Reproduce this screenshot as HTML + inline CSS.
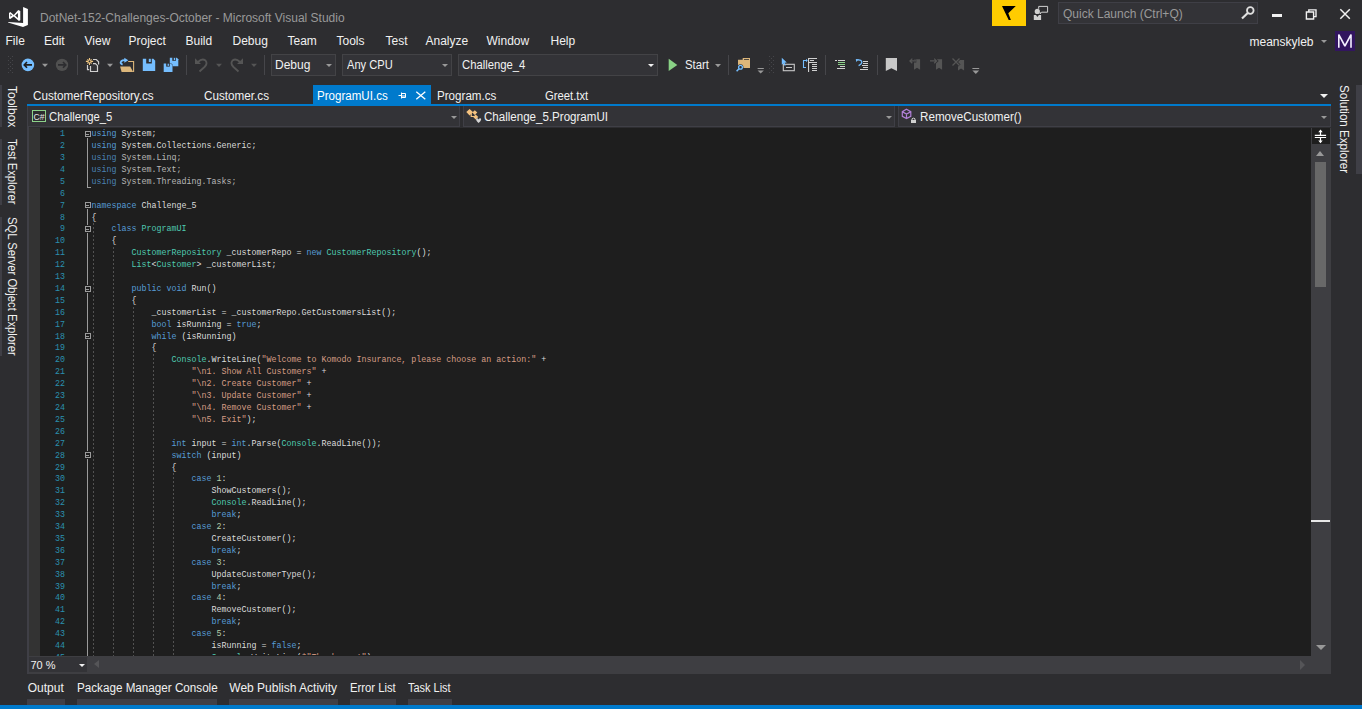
<!DOCTYPE html>
<html><head><meta charset="utf-8">
<style>
*{margin:0;padding:0;box-sizing:border-box}
html,body{width:1362px;height:709px;overflow:hidden;background:#2D2D30}
body{position:relative;font-family:"Liberation Sans",sans-serif;font-size:12px;color:#F1F1F1}
.a{position:absolute}
.tx{position:absolute;white-space:pre;line-height:14px}
svg{position:absolute;overflow:visible}
.ln,.num{position:absolute;white-space:pre;font-family:"Liberation Mono",monospace;font-size:8.333px;line-height:12px;height:12px}
.ln{left:91.5px;color:#DCDCDC}
.num{left:40px;width:25px;text-align:right;color:#2B91AF}
i{font-style:normal}
.k{color:#569CD6}.t{color:#4EC9B0}.s{color:#D69D85}.n{color:#B5CEA8}
.dim{opacity:.8}
.dd{position:absolute;background:#333337;border:1px solid #434346}
.arr{position:absolute;width:0;height:0;border-left:3px solid transparent;border-right:3px solid transparent;border-top:3px solid #999}
.sep{position:absolute;width:1px;height:20px;top:55px;background:#46464A}
.vt{position:absolute;white-space:pre;transform-origin:0 0;transform:rotate(90deg);line-height:14px}
.bar{position:absolute;background:#3F3F46}
.gd{position:absolute;width:1px;background:repeating-linear-gradient(to bottom,#525252 0,#525252 2px,transparent 2px,transparent 4px)}
.ol{position:absolute;background:#9B9B9B}
.fb{position:absolute;left:85px;width:6px;height:6px;border:1px solid #9B9B9B;background:#1E1E1E;box-shadow:0 0 0 1px #1E1E1E}
.fb::after{content:"";position:absolute;left:0;top:2px;width:3px;height:1px;background:#9B9B9B}
</style></head><body>

<!-- ===== TITLE BAR ===== -->
<svg style="left:0;top:0" width="40" height="30" viewBox="0 0 40 30">
  <path fill="#fff" d="M23.1 7 L27.9 8.9 L27.9 25 L23 27.1 L8 22.6 L8.3 22 L23.1 23 Z"/>
  <path fill="#fff" fill-rule="evenodd" d="M9 12.9 L10.3 12.1 L13.8 15 L18.2 10 L20.3 10.9 V20.3 L18.9 20.9 L13.8 16.6 L10.3 19.1 L9 18.4 Z M10.4 14 V16.7 L12 15.3 Z M17.9 12.9 V17.9 L15.1 15.4 Z"/>
</svg>
<div class="tx" style="left:40px;top:11px;color:#999999">DotNet-152-Challenges-October - Microsoft Visual Studio</div>

<div class="a" style="left:992px;top:0;width:34px;height:26px;background:#FFCC00"></div>
<svg style="left:992px;top:0" width="34" height="26" viewBox="992 0 34 26">
  <path fill="#000" d="M1002 5.9 L1015.8 5.9 L1008.3 13.3 L1010.9 19.9 L1008.7 19.9 Z"/>
</svg>
<svg style="left:1030px;top:4px" width="20" height="20" viewBox="1030 4 20 20">
  <circle cx="1037.3" cy="11.4" r="2.6" fill="#D0D0D0"/>
  <path fill="#D0D0D0" d="M1033.8 15 L1036 15 L1037.4 17 L1038.9 15 L1041.1 15 L1041.1 20.1 L1033.8 20.1 Z"/>
  <path fill="none" stroke="#D0D0D0" stroke-width="1" d="M1038.7 8.8 V6.4 H1047.6 V12.2 H1041.5 L1040.2 14 L1040.2 12.2"/>
</svg>
<div class="a" style="left:1058px;top:2px;width:200px;height:22px;background:#333337;border:1px solid #3F3F46"></div>
<div class="tx" style="left:1063px;top:7px;color:#999999">Quick Launch (Ctrl+Q)</div>
<svg style="left:1238px;top:4px" width="20" height="18" viewBox="1238 4 20 18">
  <circle cx="1250.3" cy="10.5" r="3.3" fill="none" stroke="#E0E0E0" stroke-width="1.8"/>
  <path d="M1248 12.8 L1242 18.5" stroke="#E0E0E0" stroke-width="2.2"/>
</svg>
<div class="a" style="left:1272px;top:14px;width:10px;height:3px;background:#F1F1F1"></div>
<svg style="left:1302px;top:6px" width="20" height="16" viewBox="1302 6 20 16">
  <path fill="none" stroke="#F1F1F1" stroke-width="1.4" d="M1306.4 12 H1313.6 V19 H1306.4 Z M1308.8 12 V9.9 H1316 V16.6 H1313.6"/>
</svg>
<svg style="left:1336px;top:6px" width="18" height="16" viewBox="1336 6 18 16">
  <path stroke="#F1F1F1" stroke-width="1.5" d="M1340.3 9.3 L1349.8 18.8 M1349.8 9.3 L1340.3 18.8"/>
</svg>

<!-- ===== MENU BAR ===== -->
<div class="tx" style="left:5.5px;top:34px">File</div>
<div class="tx" style="left:44px;top:34px">Edit</div>
<div class="tx" style="left:84.5px;top:34px">View</div>
<div class="tx" style="left:128.5px;top:34px">Project</div>
<div class="tx" style="left:185.5px;top:34px">Build</div>
<div class="tx" style="left:232.5px;top:34px">Debug</div>
<div class="tx" style="left:287.5px;top:34px">Team</div>
<div class="tx" style="left:336.5px;top:34px">Tools</div>
<div class="tx" style="left:385.5px;top:34px">Test</div>
<div class="tx" style="left:425.5px;top:34px">Analyze</div>
<div class="tx" style="left:486.5px;top:34px">Window</div>
<div class="tx" style="left:550.5px;top:34px">Help</div>

<div class="tx" style="left:1249.5px;top:35px">meanskyleb</div>
<div class="arr" style="left:1321px;top:40px"></div>
<div class="a" style="left:1335px;top:31px;width:20px;height:20px;background:#32155F"></div>
<svg style="left:1335px;top:31px" width="20" height="20" viewBox="1335 31 20 20"><path fill="none" stroke="#F4F0FF" stroke-width="1.6" stroke-linejoin="bevel" d="M1338.8 47.7 V34.6 L1344.9 46 L1351 34.6 V47.7"/></svg>

<!-- ===== TOOLBAR ===== -->
<svg style="left:0;top:52px" width="990" height="26" viewBox="0 52 990 26">
  <!-- grip -->
  <g fill="#46464A">
    <rect x="8" y="56" width="1" height="1"/><rect x="12" y="56" width="1" height="1"/>
    <rect x="10" y="58" width="1" height="1"/>
    <rect x="8" y="60" width="1" height="1"/><rect x="12" y="60" width="1" height="1"/>
    <rect x="10" y="62" width="1" height="1"/>
    <rect x="8" y="64" width="1" height="1"/><rect x="12" y="64" width="1" height="1"/>
    <rect x="10" y="66" width="1" height="1"/>
    <rect x="8" y="68" width="1" height="1"/><rect x="12" y="68" width="1" height="1"/>
    <rect x="10" y="70" width="1" height="1"/>
    <rect x="8" y="72" width="1" height="1"/><rect x="12" y="72" width="1" height="1"/>
  </g>
  <!-- back -->
  <circle cx="27.9" cy="64.9" r="6.3" fill="#75BEFF"/>
  <path d="M24.2 64.9 H32 M27 62 L24.2 64.9 L27 67.8" fill="none" stroke="#1E1E1E" stroke-width="1.6"/>
  <path d="M42 63.8 H48 L45 67 Z" fill="#999"/>
  <!-- forward -->
  <circle cx="62" cy="64.9" r="6.2" fill="#505050"/>
  <path d="M58 64.9 H65.8 M63 62 L65.8 64.9 L63 67.8" fill="none" stroke="#2D2D30" stroke-width="1.6"/>
  <rect x="77" y="55" width="1" height="20" fill="#46464A"/>
  <!-- new project -->
  <path d="M93 59.5 H96.3 L98.6 61.8 V64.5" fill="none" stroke="#D0D0D0" stroke-width="1.2"/>
  <path d="M87.5 65 V69.6 H89.2" fill="none" stroke="#D0D0D0" stroke-width="1.2"/>
  <path d="M90.5 63.6 H95.4 L97.5 65.7 V71.5 H90.5 Z" fill="#333337"/>
  <path d="M93 63.6 H95.4 L97.5 65.7 V71.5 H90.5 V66" fill="none" stroke="#D0D0D0" stroke-width="1.2"/>
  <g stroke="#F2C77F" stroke-width="1.1" fill="none"><path d="M89.5 58 V64.9 M85.9 61.4 H93.1 M87.4 59.4 L91.6 63.5 M91.6 59.4 L87.4 63.5"/></g>
  <circle cx="89.5" cy="61.4" r="1.3" fill="#2D2D30" stroke="#F2C77F" stroke-width="0.9"/>
  <path d="M107 63.8 H113 L110 67 Z" fill="#999"/>
  <!-- open -->
  <path d="M128.2 61.5 H133.6 V72" fill="none" stroke="#DCB67A" stroke-width="1.1"/>
  <path d="M120.1 66.6 H130.2 L133.2 72 H121.6 Z" fill="#DCB67A"/>
  <path d="M122.6 64.6 Q119.6 63.2 121.2 61.3 Q122.6 60 125.2 60.2" fill="none" stroke="#75BEFF" stroke-width="1.9"/>
  <path d="M124.3 57.8 L128.3 60.3 L124.3 62.8 Z" fill="#75BEFF"/>
  <!-- save -->
  <path d="M142.8 58.8 H153.3 L155.2 60.7 V71.1 H142.8 Z" fill="#75BEFF"/>
  <rect x="146.2" y="58" width="5.6" height="5.5" fill="#2D2D30"/>
  <rect x="148.8" y="58.8" width="2" height="3.2" fill="#75BEFF"/>
  <!-- save all -->
  <path d="M169.8 57.8 H176.8 L178.3 59.3 V66.3 H169.8 Z" fill="#75BEFF"/>
  <rect x="172.3" y="57.2" width="3.6" height="3.6" fill="#2D2D30"/>
  <rect x="173.8" y="57.9" width="1.3" height="2.2" fill="#75BEFF"/>
  <path d="M163.2 63.2 H171 L172.9 65.1 V72.4 H163.2 Z" fill="#2D2D30"/>
  <path d="M163.7 63.6 H170.8 L172.5 65.3 V72 H163.7 Z" fill="#75BEFF"/>
  <rect x="166.2" y="63" width="3.6" height="3.6" fill="#2D2D30"/>
  <rect x="167.6" y="63.7" width="1.3" height="2.2" fill="#75BEFF"/>
  <rect x="186" y="55" width="1" height="20" fill="#46464A"/>
  <!-- undo/redo -->
  <g fill="none" stroke="#555555" stroke-width="1.8">
    <path d="M198 62 Q202 58 205.5 60.5 Q208 63.5 204.5 67 L199.5 71.5"/>
    <path d="M240 62 Q236 58 232.5 60.5 Q230 63.5 233.5 67 L238.5 71.5"/>
  </g>
  <path d="M195 58.2 L195 64 L201 64 Z" fill="#555555"/>
  <path d="M243 58.2 L243 64 L237 64 Z" fill="#555555"/>
  <path d="M216 63.8 H222 L219 67 Z" fill="#555"/>
  <path d="M251 63.8 H257 L254 67 Z" fill="#555"/>
  <rect x="264" y="55" width="1" height="20" fill="#46464A"/>
  <!-- start -->
  <path d="M668.7 58.7 L677.3 64.9 L668.7 71 Z" fill="#89D185"/>
  <path d="M715 64 H721 L718 67.3 Z" fill="#999"/>
  <rect x="728" y="55" width="1" height="20" fill="#46464A"/>
  <!-- find in files -->
  <path d="M738 59.7 H742.7 V58 H750 V68 H738 Z" fill="#DCB67A"/>
  <rect x="744" y="59" width="5" height="0.8" fill="#2D2D30"/>
  <circle cx="740.5" cy="67.2" r="2.9" fill="#2D2D30"/>
  <circle cx="740.5" cy="67.2" r="1.9" fill="#2D2D30" stroke="#75BEFF" stroke-width="1.3"/>
  <path d="M739 68.8 L736.6 71.3" stroke="#75BEFF" stroke-width="1.5"/>
  <rect x="757.6" y="68" width="6.2" height="1" fill="#999"/>
  <path d="M757.6 70.4 H763.8 L760.7 73.6 Z" fill="#999"/>
  <g fill="#46464A">
    <rect x="769" y="56" width="1" height="1"/><rect x="773" y="56" width="1" height="1"/><rect x="771" y="58" width="1" height="1"/><rect x="769" y="60" width="1" height="1"/><rect x="773" y="60" width="1" height="1"/><rect x="771" y="62" width="1" height="1"/><rect x="769" y="64" width="1" height="1"/><rect x="773" y="64" width="1" height="1"/><rect x="771" y="66" width="1" height="1"/><rect x="769" y="68" width="1" height="1"/><rect x="773" y="68" width="1" height="1"/><rect x="771" y="70" width="1" height="1"/><rect x="769" y="72" width="1" height="1"/><rect x="773" y="72" width="1" height="1"/></g>
  <!-- pointer + rect -->
  <rect x="783.3" y="64.3" width="11" height="6.4" fill="none" stroke="#C8C8C8" stroke-width="1.1"/>
  <rect x="786" y="67" width="6" height="1" fill="#C8C8C8"/>
  <path d="M781.8 57.8 L786.8 62.5 L784.6 62.8 L785.8 65.3 L784.6 65.8 L783.4 63.4 L781.8 64.8 Z" fill="#75BEFF"/>
  <!-- format icon -->
  <path d="M806.5 60.5 H803.5 V67.5 H806" fill="none" stroke="#75BEFF" stroke-width="1.1"/>
  <path d="M806 58.8 L807.8 60.5 L806 62.2 Z" fill="#75BEFF"/>
  <rect x="808" y="58" width="1.1" height="14" fill="#D0D0D0"/>
  <g fill="#D0D0D0"><rect x="808" y="58" width="9" height="1"/><rect x="810" y="60" width="4" height="1"/><rect x="808" y="62" width="9" height="1"/><rect x="812" y="64" width="5" height="1"/><rect x="812" y="66" width="5" height="1"/><rect x="812" y="68" width="5" height="1"/><rect x="812" y="70" width="5" height="1"/></g>
  <rect x="825" y="55" width="1" height="20" fill="#46464A"/>
  <!-- comment -->
  <g fill="#D0D0D0"><rect x="835" y="60" width="2" height="1"/><rect x="838" y="60" width="7" height="1"/><rect x="840" y="66" width="5" height="1"/><rect x="837" y="68" width="8" height="1"/></g>
  <g fill="#8DD28A"><rect x="838" y="62" width="7" height="1"/><rect x="838" y="64" width="7" height="1"/></g>
  <!-- uncomment -->
  <path d="M857.5 60 Q861.8 59.5 861.8 62.2 Q861.8 64 858.6 65.6" fill="none" stroke="#75BEFF" stroke-width="1.3"/>
  <path d="M855.8 59 L858.8 59.2 L856.3 62 Z" fill="#75BEFF"/>
  <g fill="#D0D0D0"><rect x="863" y="61" width="5" height="1"/><rect x="863" y="63" width="5" height="1"/><rect x="862" y="65" width="6" height="1"/><rect x="863" y="67" width="5" height="1"/><rect x="860" y="69" width="8" height="1"/></g>
  <rect x="877" y="55" width="1" height="20" fill="#46464A"/>
  <!-- bookmarks -->
  <path d="M885.8 57.9 H897 V71 L891.4 68.3 L885.8 71 Z" fill="#C8C8C8"/>
  <g fill="#555555">
    <path d="M914 59.2 H920.1 V69.8 L917 67.8 L914 69.8 Z"/>
    <path d="M936 59.2 H942.1 V69.8 L939 67.8 L936 69.8 Z"/>
    <path d="M958 60 H964.1 V70.5 L961 68.5 L958 70.5 Z"/>
  </g>
  <g fill="none" stroke="#2D2D30" stroke-width="3">
    <path d="M916.3 60.9 H910 M912.3 58.6 L910 60.9 L912.3 63.2"/>
    <path d="M930 60.9 H936.5 M934.2 58.6 L936.5 60.9 L934.2 63.2"/>
    <path d="M952.5 58.5 L959.5 65.5 M959.5 58.5 L952.5 65.5"/>
  </g>
  <g fill="none" stroke="#555555" stroke-width="1.3">
    <path d="M916.3 60.9 H910 M912.3 58.6 L910 60.9 L912.3 63.2"/>
    <path d="M930 60.9 H936.5 M934.2 58.6 L936.5 60.9 L934.2 63.2"/>
    <path d="M952.5 58.5 L959.5 65.5 M959.5 58.5 L952.5 65.5"/>
  </g>
  <rect x="972.4" y="68" width="6.8" height="1" fill="#999"/>
  <path d="M972.4 70.4 H979.2 L975.8 74 Z" fill="#999"/>
</svg>
<div class="dd" style="left:271px;top:54px;width:65px;height:22px"></div>
<div class="tx" style="left:275px;top:58px">Debug</div>
<div class="arr" style="left:326px;top:64px"></div>
<div class="dd" style="left:342px;top:54px;width:110px;height:22px"></div>
<div class="tx" style="left:346.8px;top:58px;transform:scaleX(0.926);transform-origin:0 0">Any CPU</div>
<div class="arr" style="left:442px;top:64px"></div>
<div class="dd" style="left:458px;top:54px;width:200px;height:22px"></div>
<div class="tx" style="left:461.6px;top:58px;transform:scaleX(0.94);transform-origin:0 0">Challenge_4</div>
<div class="arr" style="left:648px;top:64px;border-top-color:#F1F1F1"></div>
<div class="tx" style="left:684.8px;top:58px;transform:scaleX(0.944);transform-origin:0 0">Start</div>


<!-- ===== LEFT VERTICAL TABS ===== -->
<div class="bar" style="left:0;top:85px;width:2px;height:42px"></div>
<div class="vt" style="left:19px;top:86px">Toolbox</div>
<div class="bar" style="left:0;top:139px;width:2px;height:66px"></div>
<div class="vt" style="left:19px;top:139px;transform:rotate(90deg) scaleX(0.937)">Test Explorer</div>
<div class="bar" style="left:0;top:217px;width:2px;height:139px"></div>
<div class="vt" style="left:19px;top:217px;transform:rotate(90deg) scaleX(0.936)">SQL Server Object Explorer</div>

<!-- ===== RIGHT VERTICAL TAB ===== -->
<div class="bar" style="left:1356px;top:85px;width:6px;height:89px"></div>
<div class="vt" style="left:1351px;top:85px;transform:rotate(90deg) scaleX(0.964)">Solution Explorer</div>

<!-- ===== DOC TABS ===== -->
<div class="tx" style="left:32.5px;top:89px;transform:scaleX(0.975);transform-origin:0 0">CustomerRepository.cs</div>
<div class="tx" style="left:203.5px;top:89px;transform:scaleX(0.976);transform-origin:0 0">Customer.cs</div>
<div class="a" style="left:313px;top:85px;width:118px;height:20px;background:#007ACC"></div>
<div class="tx" style="left:316.8px;top:89px;color:#fff;transform:scaleX(0.964);transform-origin:0 0">ProgramUI.cs</div>
<svg style="left:396px;top:88px" width="14" height="14" viewBox="396 88 14 14">
  <path fill="none" stroke="#fff" stroke-width="1" d="M398.5 95.5 H401.5 M401.5 92.5 V98.5 M401.5 93.5 H405.5 V97.5 H401.5 M401.5 96 H405.5"/>
</svg>
<svg style="left:414px;top:89px" width="14" height="14" viewBox="414 89 14 14">
  <path stroke="#fff" stroke-width="1.3" d="M416.3 91.7 L425.3 99.2 M425.3 91.7 L416.3 99.2"/>
</svg>
<div class="tx" style="left:436.6px;top:89px;transform:scaleX(0.967);transform-origin:0 0">Program.cs</div>
<div class="tx" style="left:545.2px;top:89px;transform:scaleX(0.94);transform-origin:0 0">Greet.txt</div>
<div class="arr" style="left:1320px;top:94px;border-left-width:4.2px;border-right-width:4.2px;border-top:4.2px solid #F1F1F1"></div>
<div class="a" style="left:27px;top:104px;width:1304px;height:2px;background:#007ACC"></div>

<!-- ===== NAV BAR ===== -->
<div class="a" style="left:27px;top:106px;width:1304px;height:22px;background:#2D2D30"></div>
<div class="a" style="left:27px;top:106px;width:433px;height:21px;background:#333337;border:1px solid #3F3F46;border-top:0"></div>
<div class="a" style="left:463px;top:106px;width:432px;height:21px;background:#333337;border:1px solid #3F3F46;border-top:0"></div>
<div class="a" style="left:898px;top:106px;width:433px;height:21px;background:#333337;border:1px solid #3F3F46;border-top:0"></div>
<div class="arr" style="left:451px;top:116px"></div>
<div class="arr" style="left:886px;top:116px"></div>
<div class="arr" style="left:1321px;top:116px"></div>
<svg style="left:31px;top:109px" width="16" height="14" viewBox="31 109 16 14">
  <rect x="32.5" y="110.5" width="13" height="11" fill="#2D2D30" stroke="#8DD28A" stroke-width="1"/>
  <text x="33.6" y="119.6" font-family="Liberation Sans" font-size="9.6" fill="#E6E6E6" textLength="11" lengthAdjust="spacingAndGlyphs">C#</text>
</svg>
<div class="tx" style="left:49.3px;top:110px;transform:scaleX(0.94);transform-origin:0 0">Challenge_5</div>
<svg style="left:465px;top:108px" width="18" height="16" viewBox="465 108 18 16">
  <path fill="#F4C27F" d="M469.6 108.9 L472.9 112.1 L469.6 115.4 L466.3 112.1 Z M474.8 110.2 L477.3 112.6 L474.8 115.1 L472.3 112.6 Z M475.7 114.4 L478.2 116.9 L475.7 119.4 L473.2 116.9 Z"/>
  <path fill="none" stroke="#F4C27F" stroke-width="1.2" d="M471.2 112.5 V116.5 H474"/>
  <path fill="#D4D4D4" d="M478.6 119.4 C477.6 117.6 475.9 118 476.1 119.7 C476.3 120.8 477.6 121.9 478.6 123 C479.6 121.9 480.9 120.8 481.1 119.7 C481.3 118 479.6 117.6 478.6 119.4 Z"/>
</svg>
<div class="tx" style="left:484.4px;top:110px;transform:scaleX(0.963);transform-origin:0 0">Challenge_5.ProgramUI</div>
<svg style="left:900px;top:107px" width="18" height="18" viewBox="900 107 18 18">
  <path fill="none" stroke="#B180D7" stroke-width="1.2" d="M906.5 109.3 L910.8 111.7 L910.8 116.3 L906.5 118.6 L902.3 116.3 L902.3 111.7 Z M902.5 111.9 L906.5 114.1 L910.6 111.9 M906.5 114.1 V118.5"/>
  <path fill="#D0D0D0" d="M911 120 H916 V123 H911 Z"/>
  <path fill="none" stroke="#D0D0D0" stroke-width="1" d="M912 120 V118.8 Q913.5 117.5 915 118.8 V120"/>
</svg>
<div class="tx" style="left:919.5px;top:110px;transform:scaleX(0.97);transform-origin:0 0">RemoveCustomer()</div>

<!-- ===== EDITOR ===== -->
<div class="a" style="left:27px;top:127px;width:2px;height:547px;background:#3F3F46"></div>
<div class="a" style="left:29px;top:128px;width:11px;height:528px;background:#333333"></div>
<div class="a" style="left:40px;top:128px;width:1271px;height:528px;background:#1E1E1E;overflow:hidden">
  <div class="a" style="left:-40px;top:-128px;width:1362px;height:709px">
<div class="num" style="top:128.200px">1</div>
<div class="num" style="top:140.105px">2</div>
<div class="num" style="top:152.010px">3</div>
<div class="num" style="top:163.915px">4</div>
<div class="num" style="top:175.820px">5</div>
<div class="num" style="top:187.725px">6</div>
<div class="num" style="top:199.630px">7</div>
<div class="num" style="top:211.535px">8</div>
<div class="num" style="top:223.440px">9</div>
<div class="num" style="top:235.345px">10</div>
<div class="num" style="top:247.250px">11</div>
<div class="num" style="top:259.155px">12</div>
<div class="num" style="top:271.060px">13</div>
<div class="num" style="top:282.965px">14</div>
<div class="num" style="top:294.870px">15</div>
<div class="num" style="top:306.775px">16</div>
<div class="num" style="top:318.680px">17</div>
<div class="num" style="top:330.585px">18</div>
<div class="num" style="top:342.490px">19</div>
<div class="num" style="top:354.395px">20</div>
<div class="num" style="top:366.300px">21</div>
<div class="num" style="top:378.205px">22</div>
<div class="num" style="top:390.110px">23</div>
<div class="num" style="top:402.015px">24</div>
<div class="num" style="top:413.920px">25</div>
<div class="num" style="top:425.825px">26</div>
<div class="num" style="top:437.730px">27</div>
<div class="num" style="top:449.635px">28</div>
<div class="num" style="top:461.540px">29</div>
<div class="num" style="top:473.445px">30</div>
<div class="num" style="top:485.350px">31</div>
<div class="num" style="top:497.255px">32</div>
<div class="num" style="top:509.160px">33</div>
<div class="num" style="top:521.065px">34</div>
<div class="num" style="top:532.970px">35</div>
<div class="num" style="top:544.875px">36</div>
<div class="num" style="top:556.780px">37</div>
<div class="num" style="top:568.685px">38</div>
<div class="num" style="top:580.590px">39</div>
<div class="num" style="top:592.495px">40</div>
<div class="num" style="top:604.400px">41</div>
<div class="num" style="top:616.305px">42</div>
<div class="num" style="top:628.210px">43</div>
<div class="num" style="top:640.115px">44</div>
<div class="num" style="top:652.020px">45</div>
<div class="gd" style="left:93px;top:223.44px;height:436.56px"></div>
<div class="gd" style="left:113px;top:247.25px;height:412.75px"></div>
<div class="gd" style="left:133px;top:306.77px;height:353.23px"></div>
<div class="gd" style="left:153px;top:354.39px;height:305.61px"></div>
<div class="gd" style="left:173px;top:473.44px;height:186.56px"></div>
<div class="ol" style="left:87px;top:137px;width:1px;height:50px"></div>
<div class="ol" style="left:87px;top:187px;width:4px;height:1px"></div>
<div class="ol" style="left:87px;top:208px;width:1px;height:452px"></div>
<div class="fb" style="top:131px"></div>
<div class="fb" style="top:202px"></div>
<div class="fb" style="top:226px"></div>
<div class="fb" style="top:286px"></div>
<div class="fb" style="top:333px"></div>
<div class="fb" style="top:452px"></div>
<div class="ln" style="top:128.200px"><i class="k">using</i> System;</div>
<div class="ln" style="top:140.105px"><i class="k">using</i> System.Collections.Generic;</div>
<div class="ln dim" style="top:152.010px"><i class="k">using</i> System.Linq;</div>
<div class="ln dim" style="top:163.915px"><i class="k">using</i> System.Text;</div>
<div class="ln dim" style="top:175.820px"><i class="k">using</i> System.Threading.Tasks;</div>
<div class="ln" style="top:187.725px"></div>
<div class="ln" style="top:199.630px"><i class="k">namespace</i> Challenge_5</div>
<div class="ln" style="top:211.535px">{</div>
<div class="ln" style="top:223.440px">    <i class="k">class</i> <i class="t">ProgramUI</i></div>
<div class="ln" style="top:235.345px">    {</div>
<div class="ln" style="top:247.250px">        <i class="t">CustomerRepository</i> _customerRepo = <i class="k">new</i> <i class="t">CustomerRepository</i>();</div>
<div class="ln" style="top:259.155px">        <i class="t">List</i>&lt;<i class="t">Customer</i>&gt; _customerList;</div>
<div class="ln" style="top:271.060px"></div>
<div class="ln" style="top:282.965px">        <i class="k">public</i> <i class="k">void</i> Run()</div>
<div class="ln" style="top:294.870px">        {</div>
<div class="ln" style="top:306.775px">            _customerList = _customerRepo.GetCustomersList();</div>
<div class="ln" style="top:318.680px">            <i class="k">bool</i> isRunning = <i class="k">true</i>;</div>
<div class="ln" style="top:330.585px">            <i class="k">while</i> (isRunning)</div>
<div class="ln" style="top:342.490px">            {</div>
<div class="ln" style="top:354.395px">                <i class="t">Console</i>.WriteLine(<i class="s">&quot;Welcome to Komodo Insurance, please choose an action:&quot;</i> +</div>
<div class="ln" style="top:366.300px">                    <i class="s">&quot;\n1. Show All Customers&quot;</i> +</div>
<div class="ln" style="top:378.205px">                    <i class="s">&quot;\n2. Create Customer&quot;</i> +</div>
<div class="ln" style="top:390.110px">                    <i class="s">&quot;\n3. Update Customer&quot;</i> +</div>
<div class="ln" style="top:402.015px">                    <i class="s">&quot;\n4. Remove Customer&quot;</i> +</div>
<div class="ln" style="top:413.920px">                    <i class="s">&quot;\n5. Exit&quot;</i>);</div>
<div class="ln" style="top:425.825px"></div>
<div class="ln" style="top:437.730px">                <i class="k">int</i> input = <i class="k">int</i>.Parse(<i class="t">Console</i>.ReadLine());</div>
<div class="ln" style="top:449.635px">                <i class="k">switch</i> (input)</div>
<div class="ln" style="top:461.540px">                {</div>
<div class="ln" style="top:473.445px">                    <i class="k">case</i> <i class="n">1</i>:</div>
<div class="ln" style="top:485.350px">                        ShowCustomers();</div>
<div class="ln" style="top:497.255px">                        <i class="t">Console</i>.ReadLine();</div>
<div class="ln" style="top:509.160px">                        <i class="k">break</i>;</div>
<div class="ln" style="top:521.065px">                    <i class="k">case</i> <i class="n">2</i>:</div>
<div class="ln" style="top:532.970px">                        CreateCustomer();</div>
<div class="ln" style="top:544.875px">                        <i class="k">break</i>;</div>
<div class="ln" style="top:556.780px">                    <i class="k">case</i> <i class="n">3</i>:</div>
<div class="ln" style="top:568.685px">                        UpdateCustomerType();</div>
<div class="ln" style="top:580.590px">                        <i class="k">break</i>;</div>
<div class="ln" style="top:592.495px">                    <i class="k">case</i> <i class="n">4</i>:</div>
<div class="ln" style="top:604.400px">                        RemoveCustomer();</div>
<div class="ln" style="top:616.305px">                        <i class="k">break</i>;</div>
<div class="ln" style="top:628.210px">                    <i class="k">case</i> <i class="n">5</i>:</div>
<div class="ln" style="top:640.115px">                        isRunning = <i class="k">false</i>;</div>
<div class="ln" style="top:652.020px;height:3.4px;overflow:hidden">                        <i class="t">Console</i>.WriteLine(<i class="s">$&quot;Thank you!&quot;</i>);</div>
  </div>
</div>

<!-- vertical scrollbar -->
<div class="a" style="left:1311px;top:128px;width:20px;height:546px;background:#3E3E42"></div>
<div class="a" style="left:1312px;top:128px;width:18px;height:16px;background:#1E1E1E"></div>
<svg style="left:1312px;top:128px" width="18" height="16" viewBox="1312 128 18 16">
  <path stroke="#fff" stroke-width="1.2" d="M1314.8 135.3 H1326.1 M1314.8 137.5 H1326.1 M1320.5 130.5 V135.3 M1320.5 137.5 V142.3"/>
  <path fill="#fff" d="M1318.3 132.3 L1320.5 129.6 L1322.7 132.3 Z M1318.3 140.5 L1320.5 143.2 L1322.7 140.5 Z"/>
</svg>
<div class="arr" style="left:1316px;top:151px;border-left-width:4.5px;border-right-width:4.5px;border-top:0;border-bottom:5px solid #999"></div>
<div class="a" style="left:1315px;top:162px;width:11px;height:125px;background:#686868"></div>
<div class="a" style="left:1311px;top:520px;width:19px;height:2px;background:#E8E8E8"></div>
<div class="arr" style="left:1315.5px;top:645px;border-left-width:5px;border-right-width:5px;border-top:5px solid #999"></div>

<!-- horizontal scrollbar -->
<div class="a" style="left:29px;top:656px;width:1282px;height:18px;background:#3E3E42"></div>
<div class="a" style="left:29px;top:657px;width:58px;height:15px;background:#333337"></div>
<div class="tx" style="left:30.5px;top:659px;font-size:11px;line-height:13px">70 %</div>
<div class="arr" style="left:79px;top:664px;border-top-color:#F1F1F1"></div>
<div class="arr" style="left:94px;top:660px;border-top:4.5px solid transparent;border-bottom:4.5px solid transparent;border-left:0;border-right:5px solid #555558"></div>
<div class="arr" style="left:1300px;top:659.5px;border-top:5px solid transparent;border-bottom:5px solid transparent;border-right:0;border-left:5px solid #555558"></div>

<!-- ===== BOTTOM TABS ===== -->
<div class="tx" style="left:27.7px;top:681px">Output</div>
<div class="tx" style="left:76.6px;top:681px;transform:scaleX(0.972);transform-origin:0 0">Package Manager Console</div>
<div class="tx" style="left:229.3px;top:681px">Web Publish Activity</div>
<div class="tx" style="left:349.6px;top:681px;transform:scaleX(0.939);transform-origin:0 0">Error List</div>
<div class="tx" style="left:408.3px;top:681px;transform:scaleX(0.912);transform-origin:0 0">Task List</div>
<div class="bar" style="left:27px;top:699px;width:38px;height:6px"></div>
<div class="bar" style="left:77px;top:699px;width:140px;height:6px"></div>
<div class="bar" style="left:229px;top:699px;width:109px;height:6px"></div>
<div class="bar" style="left:350px;top:699px;width:46px;height:6px"></div>
<div class="bar" style="left:408px;top:699px;width:44px;height:6px"></div>
<div class="a" style="left:0;top:705px;width:1362px;height:4px;background:#007ACC"></div>
</body></html>
